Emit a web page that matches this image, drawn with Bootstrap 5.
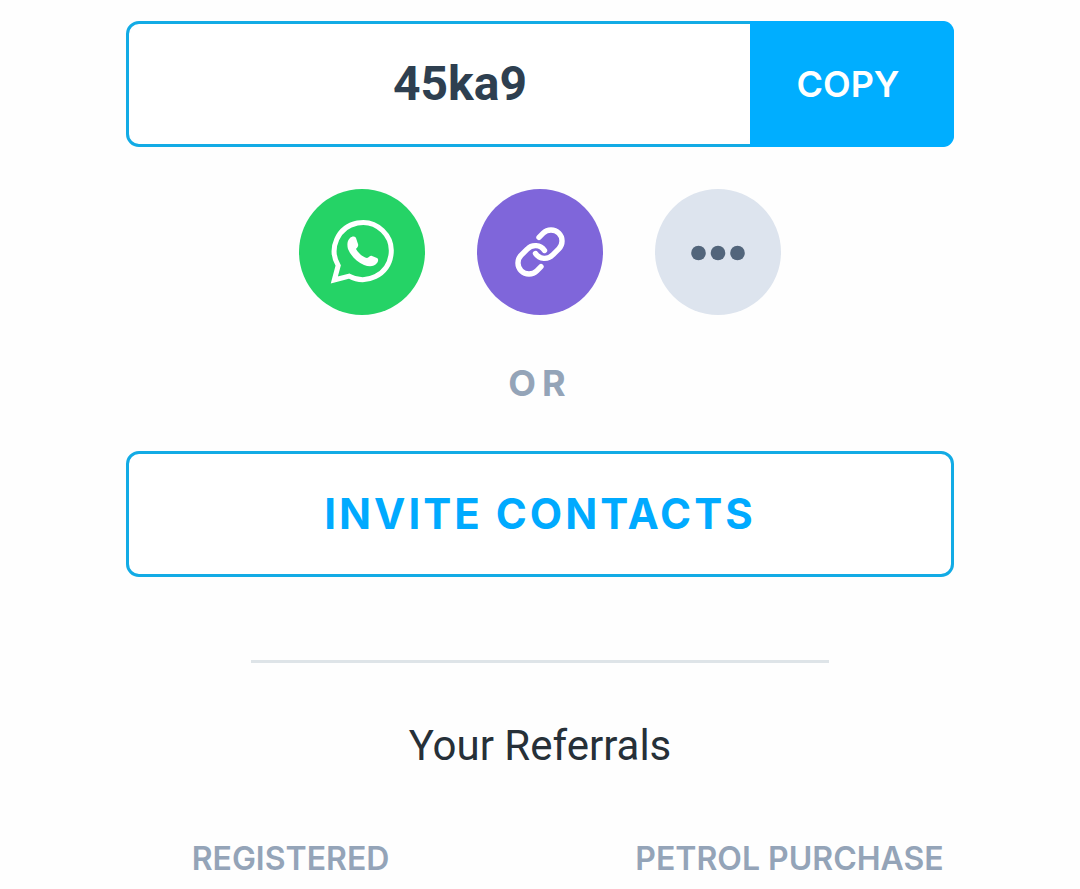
<!DOCTYPE html>
<html lang="en">
<head>
<meta charset="utf-8">
<meta name="viewport" content="width=device-width, initial-scale=1">
<title>Invite friends</title>
<link href="https://cdn.jsdelivr.net/npm/bootstrap@5.3.0/dist/css/bootstrap.min.css" rel="stylesheet">
<style>
  body { font-family: Inter, "Liberation Sans", sans-serif; background: #fefefe; }
  .invite-panel { max-width: 828px; padding-top: 21px; }
  .code-group { border: 3px solid #12abe5; border-radius: 13px; height: 126px; }
  .code-group .form-control { border: 0; background: #fff; color: #2e3f50; font: 700 48px/60px Roboto, sans-serif; padding: 0 0 0 38px; }
  .copy-btn { width: 204px; margin: -3px; padding: 0 8px 0 0; border-radius: 0 11px 11px 0; background: #00aeff; color: #fff; font-size: 36px; font-weight: 600; }
  .share-row { gap: 52px; margin-top: 42px; }
  .share-btn { width: 126px; height: 126px; }
  .share-btn svg { width: 126px; height: 126px; display: block; }
  .share-whatsapp { background: #25d366; }
  .share-link { background: #7f66da; }
  .share-more { background: #dde4ee; }
  .or-label { margin: 46px 0; font-size: 36px; line-height: 44px; font-weight: 700; letter-spacing: 6px; color: #94a4b8; }
  .invite-btn { height: 126px; border: 3px solid #12abe5; border-radius: 13px; color: #00aaff; background: #fff; font: 700 42px/50px Inter, sans-serif; letter-spacing: 3px; }
  .section-rule { max-width: 578px; margin: 83px auto 58px; border-top: 3px solid #dee4e8; opacity: 1; }
  .referrals-title { font: 400 42px/50px Roboto, sans-serif; color: #263038; margin-bottom: 66px; }
  .referrals { padding: 0 41px; }
  .referrals th { width: 50%; padding: 0; border: 0; background: none; color: #94a4b8; font-size: 32px; line-height: 44px; font-weight: 600; }
</style>
</head>
<body>
<main>
  <section class="invite-panel w-100 mx-auto text-center">
    <div class="code-group d-flex">
      <input class="form-control text-center rounded-4" type="text" value="45ka9" aria-label="Referral code" readonly>
      <button class="btn copy-btn flex-shrink-0" type="button">COPY</button>
    </div>
    <div class="share-row d-flex justify-content-center">
      <button class="btn share-btn share-whatsapp rounded-circle border-0 p-0" type="button" aria-label="Share on WhatsApp">
        <svg viewBox="0 0 126 126" fill="none">
          <path d="M35.300 91 L39.200 76.500 A28.500 28.500 0 1 1 50.200 87.100 Z" stroke="#fff" stroke-width="5"/>
          <path d="M51 49c2-2 5-2 6 0l2 6c1 3-2 4-2 5 3 5 7 8 11 9 2 0 3-3 5-2l5 2c2 1 1 4 0 5-3 4-8 4-13 2-7-3-13-9-16-16-1-4-1-8 2-11Z" fill="#fff"/>
        </svg>
      </button>
      <button class="btn share-btn share-link rounded-circle border-0 p-0" type="button" aria-label="Copy link">
        <svg viewBox="0 0 126 126" fill="none" stroke="#fff" stroke-width="5.400" stroke-linecap="round">
          <path d="M62 48.400 L66.200 44.200 A11 11 0 0 1 81.800 59.800 L75.800 65.800 A11 11 0 0 1 58.500 64.500"/>
          <path d="M64 77.600 L59.800 81.800 A11 11 0 0 1 44.200 66.200 L50.200 60.200 A11 11 0 0 1 67.500 61.500"/>
        </svg>
      </button>
      <button class="btn share-btn share-more rounded-circle border-0 p-0" type="button" aria-label="More options">
        <svg viewBox="0 0 126 126" fill="#52657b"><circle cx="43.500" cy="64" r="7.300"/><circle cx="63" cy="64" r="7.300"/><circle cx="82.500" cy="64" r="7.300"/></svg>
      </button>
    </div>
    <p class="or-label">OR</p>
    <button class="btn invite-btn w-100" type="button">INVITE CONTACTS</button>
    <hr class="section-rule">
    <h2 class="referrals-title">Your Referrals</h2>
  </section>
  <section class="referrals">
    <table class="table table-borderless text-center mb-0">
      <thead><tr><th scope="col">REGISTERED</th><th scope="col">PETROL PURCHASE</th></tr></thead>
    </table>
  </section>
</main>
<script src="https://cdn.jsdelivr.net/npm/bootstrap@5.3.0/dist/js/bootstrap.bundle.min.js"></script>
</body>
</html>
